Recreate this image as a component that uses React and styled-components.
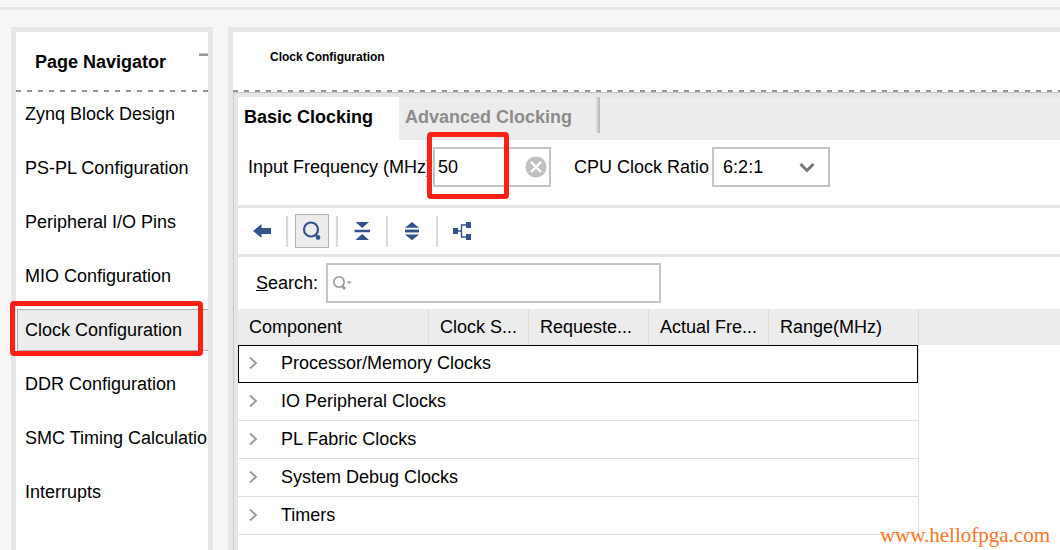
import React, { useState } from "react";
import styled, { createGlobalStyle } from "styled-components";

const c = {
  page: "#f6f6f6",
  frame: "#e6e6e6",
  soft: "#ececec",
  line: "#c8c8c8",
  field: "#c4c4c4",
  icon: "#34538d",
  mark: "#ff2015",
};

const GlobalStyle = createGlobalStyle`
  *, *::before, *::after { box-sizing: border-box; }
  body { margin: 0; background: ${c.page}; }
  body, button, input, select, table {
    font-family: "Liberation Sans", Arial, sans-serif;
    font-size: 18px;
    line-height: 20px;
    color: #000;
  }
`;

const Page = styled.div`
  position: relative;
  display: flex;
  flex-direction: column;
  height: 100vh;
  overflow: hidden;
  padding-top: 7px;
`;

const TopRule = styled.div`
  flex: none;
  height: 3px;
  background: ${c.frame};
`;

const Columns = styled.div`
  display: flex;
  flex: 1;
  min-height: 0;
  gap: 15px;
  padding: 17px 0 0 11px;
`;

const Dashes = styled.div`
  flex: none;
  height: 2px;
  background: repeating-linear-gradient(90deg, #969696 0 5px, transparent 5px 11px);
`;

const Navigator = styled.nav`
  display: flex;
  flex-direction: column;
  flex: none;
  width: 202px;
  overflow: hidden;
  background: #fff;
  border: 5px solid ${c.frame};
  border-bottom: 0;
`;

const NavHeader = styled.div`
  display: flex;
  justify-content: space-between;
  align-items: center;
  height: 58px;
  padding: 2px 0 0 19px;
`;

const NavTitle = styled.h2`
  margin: 0;
  font-size: 18px;
  line-height: 20px;
`;

const Minimize = styled.button`
  width: 9px;
  height: 20px;
  padding: 0 0 16px;
  border: 0;
  background: none;
  display: flex;
  align-items: flex-end;

  &::before {
    content: "";
    width: 9px;
    height: 3px;
    background: #999;
    border-top: 1px solid #c4c4c4;
  }
`;

const NavList = styled.ul`
  display: flex;
  flex-direction: column;
  gap: 12px;
  margin: 0;
  padding: 1px 0 0 1px;
  list-style: none;
`;

const NavLink = styled.a`
  display: block;
  width: 240px;
  height: 42px;
  padding: 10px 7px;
  border: 1px solid ${(p) => (p.$active ? "#b0b0b0" : "transparent")};
  background: ${(p) => (p.$active ? c.soft : "transparent")};
  color: #000;
  text-decoration: none;
  white-space: nowrap;
`;

const Main = styled.main`
  display: flex;
  flex-direction: column;
  flex: 1;
  min-width: 0;
  background: #fff;
  border: solid ${c.frame};
  border-width: 5px 0 0 5px;
`;

const MainTitle = styled.h1`
  margin: 0;
  height: 58px;
  padding: 17px 37px;
  font-size: 12px;
  line-height: 16px;
`;

const Inset = styled.div`
  flex: 1;
  border: solid ${c.line};
  border-width: 1px 0 0 1px;
  background: ${c.frame};
  padding: 4px 0 0 4px;
  display: flex;
`;

const Content = styled.div`
  flex: 1;
  min-width: 0;
  background: #fff;
`;

const TabBar = styled.div`
  display: flex;
  height: 43px;
  background: ${c.soft};
`;

const Tab = styled.button`
  height: 43px;
  padding: 0 6px 3px;
  width: ${(p) => p.$width}px;
  border: 0;
  background: ${(p) => (p.$active ? "#fff" : "transparent")};
  color: ${(p) => (p.$active ? "#000" : "#8c8c8c")};
  font-weight: bold;
  text-align: left;
  white-space: nowrap;
`;

const TabDivider = styled.div`
  width: 4px;
  height: 36px;
  border-left: 2px solid #d8d8d8;
  background: #bebebe;
`;

const FormRow = styled.form`
  display: flex;
  align-items: center;
  height: 65px;
  padding: 0 10px 11px;
`;

const Label = styled.label`
  flex: none;
  white-space: nowrap;
`;

const Field = styled.div`
  display: flex;
  align-items: center;
  flex: none;
  width: ${(p) => p.$width}px;
  height: 40px;
  margin-left: ${(p) => p.$gap}px;
  margin-right: 23px;
  border: 2px solid ${c.field};
  background: #fff;
`;

const Input = styled.input`
  flex: 1;
  min-width: 0;
  height: 36px;
  padding: 0 3px;
  border: 0;
  outline: 0;
  background: transparent;
`;

const IconButton = styled.button`
  display: flex;
  flex: none;
  margin: 0;
  padding: 0;
  border: 0;
  background: none;
`;

const ClearButton = styled(IconButton)`
  margin-right: 2px;
`;

const SearchMenuButton = styled(IconButton)`
  margin-left: 4px;
`;

const SelectBox = styled(Field)`
  position: relative;

  svg {
    position: absolute;
    right: 13px;
    pointer-events: none;
  }
`;

const Select = styled.select`
  width: 100%;
  height: 36px;
  padding: 0 9px;
  border: 0;
  outline: 0;
  appearance: none;
  background: transparent;
`;

const Rule = styled.div`
  height: 3px;
  background: ${c.frame};
`;

const Toolbar = styled.div`
  display: flex;
  align-items: center;
  gap: 7px;
  height: 46px;
  padding: 0 7px;
`;

const ToolButton = styled(IconButton)`
  width: 34px;
  height: 34px;
  align-items: center;
  justify-content: center;
  border: 1px solid ${(p) => (p.$active ? "#b4b4b4" : "transparent")};
  background: ${(p) => (p.$active ? c.soft : "transparent")};
`;

const ToolDivider = styled.span`
  width: 2px;
  height: 31px;
  background: #dadada;
`;

const SearchRow = styled.div`
  display: flex;
  align-items: center;
  height: 52px;
  padding-left: 18px;
`;

const Table = styled.table`
  width: 100%;
  table-layout: fixed;
  border-collapse: separate;
  border-spacing: 0;
`;

const HeadCell = styled.th`
  height: 36px;
  padding: 0 11px;
  background: ${c.soft};
  border-right: 1px solid #dcdcdc;
  font-weight: normal;
  text-align: left;
  white-space: nowrap;

  &:last-child { border-right: 0; }
`;

const GroupCell = styled.td`
  height: 38px;
  padding: 0 11px ${(p) => (p.$active ? 2 : 1)}px;
  border-right: 1px solid #dfdfdf;
  border-bottom: ${(p) => (p.$active ? "0" : "1px solid #dfdfdf")};
  box-shadow: ${(p) => (p.$active ? "inset 0 0 0 1px #000" : "none")};
`;

const Group = styled.div`
  display: flex;
  align-items: center;
  gap: 23px;
`;

const Marker = styled.div`
  position: absolute;
  left: ${(p) => p.$x}px;
  top: ${(p) => p.$y}px;
  width: ${(p) => p.$w}px;
  height: ${(p) => p.$h}px;
  border: 5px solid ${c.mark};
  border-radius: 4px;
  pointer-events: none;
`;

const Watermark = styled.div`
  position: absolute;
  right: 10px;
  bottom: 3px;
  font-family: "Liberation Serif", "Times New Roman", serif;
  font-size: 21px;
  line-height: 24px;
  color: #ff7526;
`;

const pages = [
  "Zynq Block Design",
  "PS-PL Configuration",
  "Peripheral I/O Pins",
  "MIO Configuration",
  "Clock Configuration",
  "DDR Configuration",
  "SMC Timing Calculatio",
  "Interrupts",
];

const columns = [
  ["Component", 191],
  ["Clock S...", 100],
  ["Requeste...", 120],
  ["Actual Fre...", 120],
  ["Range(MHz)", 150],
];

const groups = [
  "Processor/Memory Clocks",
  "IO Peripheral Clocks",
  "PL Fabric Clocks",
  "System Debug Clocks",
  "Timers",
];

const tools = [
  {
    name: "Back",
    art: <path d="M1 10 L9.500 3 V7 H19 V13 H9.500 V17 Z" fill={c.icon} />,
  },
  {
    name: "Search",
    art: (
      <g fill="none" stroke={c.icon}>
        <circle cx="9" cy="8.500" r="7" strokeWidth="2.200" />
        <path d="M13 13 L15 15" strokeWidth="2" />
        <circle cx="16" cy="16.500" r="1.600" strokeWidth="1.600" fill={c.icon} />
      </g>
    ),
  },
  {
    name: "Collapse all",
    art: (
      <path
        d="M3.500 1 H17 L10.200 7 Z M2.500 8.700 H18 V11.300 H2.500 Z M3.500 19 H17 L10.200 13 Z"
        fill={c.icon}
      />
    ),
  },
  {
    name: "Expand all",
    art: (
      <g fill={c.icon}>
        <path d="M10 1 L17 6.800 H3 Z M3 13.500 H17 L10 19.300 Z M3 9 H17 V11 H3 Z" />
        <path d="M3 8 H17 V9 H3 Z M3 11 H17 V12 H3 Z" opacity="0.45" />
      </g>
    ),
  },
  {
    name: "Hierarchy",
    art: (
      <g fill={c.icon}>
        <path d="M1 7 H6 V13 H1 Z M14 1 H19 V7 H14 Z M14 13 H19 V19 H14 Z" />
        <path d="M6 10 H9.500 M14 4 H9.500 V16 H14" fill="none" stroke={c.icon} strokeWidth="1.400" />
      </g>
    ),
  },
];

function Chevron() {
  return (
    <svg width="9" height="14" viewBox="0 0 9 14" aria-hidden="true">
      <path d="M1 1.500 L7 7 L1 12.500" fill="none" stroke="#999" strokeWidth="1.900" />
    </svg>
  );
}

export default function App() {
  const [frequency, setFrequency] = useState("50");
  const [query, setQuery] = useState("");

  return (
    <Page>
      <GlobalStyle />
      <TopRule />
      <Columns>
        <Navigator aria-label="Page Navigator">
          <NavHeader>
            <NavTitle>Page Navigator</NavTitle>
            <Minimize type="button" aria-label="Minimize" />
          </NavHeader>
          <Dashes />
          <NavList>
            {pages.map((page) => (
              <li key={page}>
                <NavLink href="#" $active={page === "Clock Configuration"}>
                  {page}
                </NavLink>
              </li>
            ))}
          </NavList>
        </Navigator>

        <Main>
          <MainTitle>Clock Configuration</MainTitle>
          <Dashes />
          <Inset>
            <Content>
              <TabBar role="tablist">
                <Tab type="button" role="tab" aria-selected="true" $active $width={161}>
                  Basic Clocking
                </Tab>
                <Tab type="button" role="tab" aria-selected="false" $width={197}>
                  Advanced Clocking
                </Tab>
                <TabDivider />
              </TabBar>

              <FormRow onSubmit={(e) => e.preventDefault()}>
                <Label htmlFor="frequency">Input Frequency (MHz)</Label>
                <Field $width={118} $gap={1}>
                  <Input
                    id="frequency"
                    value={frequency}
                    onChange={(e) => setFrequency(e.target.value)}
                  />
                  <ClearButton type="button" aria-label="Clear" onClick={() => setFrequency("")}>
                    <svg width="22" height="22" viewBox="0 0 22 22" aria-hidden="true">
                      <circle cx="11" cy="11" r="10.500" fill="#bfbfbf" />
                      <path d="M6 6 L16 16 M16 6 L6 16" stroke="#fff" strokeWidth="2.400" />
                    </svg>
                  </ClearButton>
                </Field>
                <Label htmlFor="ratio">CPU Clock Ratio</Label>
                <SelectBox $width={118} $gap={3}>
                  <Select id="ratio" defaultValue="6:2:1">
                    <option>6:2:1</option>
                    <option>4:2:1</option>
                  </Select>
                  <svg width="16" height="12" viewBox="0 0 16 12" aria-hidden="true">
                    <path d="M1.500 3 L8 9.500 L14.500 3" fill="none" stroke="#777" strokeWidth="3" />
                  </svg>
                </SelectBox>
              </FormRow>

              <Rule />
              <Toolbar role="toolbar">
                {tools.map(({ name, art }, i) => (
                  <React.Fragment key={name}>
                    {i > 0 && <ToolDivider />}
                    <ToolButton type="button" aria-label={name} $active={name === "Search"}>
                      <svg width="20" height="20" viewBox="0 0 20 20" aria-hidden="true">
                        {art}
                      </svg>
                    </ToolButton>
                  </React.Fragment>
                ))}
              </Toolbar>
              <Rule />

              <SearchRow>
                <Label htmlFor="search">
                  <u>S</u>earch:
                </Label>
                <Field $width={335} $gap={8}>
                  <SearchMenuButton type="button" aria-label="Search options">
                    <svg width="20" height="16" viewBox="0 0 20 16" aria-hidden="true">
                      <circle cx="7" cy="7" r="5.200" fill="none" stroke="#999" strokeWidth="1.600" />
                      <path d="M10.500 11.500 L13 14" stroke="#999" strokeWidth="2.600" />
                      <path d="M14.500 6.500 H19.500 L17 9 Z" fill="#999" />
                    </svg>
                  </SearchMenuButton>
                  <Input id="search" value={query} onChange={(e) => setQuery(e.target.value)} />
                </Field>
              </SearchRow>

              <Table>
                <colgroup>
                  {columns.map(([name, width]) => (
                    <col key={name} width={width} />
                  ))}
                  <col />
                </colgroup>
                <thead>
                  <tr>
                    {columns.map(([name]) => (
                      <HeadCell key={name}>{name}</HeadCell>
                    ))}
                    <HeadCell />
                  </tr>
                </thead>
                <tbody>
                  {groups.map((name, i) => (
                    <tr key={name}>
                      <GroupCell colSpan={5} $active={i === 0}>
                        <Group>
                          <Chevron />
                          {name}
                        </Group>
                      </GroupCell>
                    </tr>
                  ))}
                </tbody>
              </Table>
            </Content>
          </Inset>
        </Main>
      </Columns>
      <Marker $x={10} $y={301} $w={193} $h={55} />
      <Marker $x={427} $y={132} $w={82} $h={67} />
      <Watermark>www.hellofpga.com</Watermark>
    </Page>
  );
}
